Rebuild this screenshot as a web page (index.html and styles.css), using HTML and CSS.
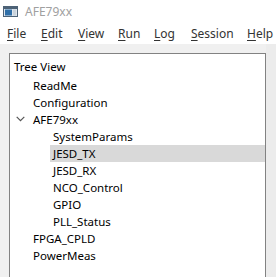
FILE: index.html
```html
<!DOCTYPE html>
<html>
<head>
<meta charset="utf-8">
<link rel="stylesheet" href="styles.css">
</head>
<body>
<div class="window">
  <div class="titlebar">
    <svg class="appicon" width="15" height="11" viewBox="0 0 15 11">
      <rect x="0.5" y="0.5" width="14" height="10" fill="#dfe6ee" stroke="#4d6276"/>
      <rect x="1" y="1" width="13" height="2" fill="#4d6276"/>
      <rect x="2" y="3.5" width="7" height="6" fill="#2f6fa8"/>
      <rect x="10" y="3.5" width="3" height="6" fill="#c9d3dc"/>
    </svg>
    <span class="title">AFE79xx</span>
  </div>
  <div class="menubar">
    <span class="menu"><u>F</u>ile</span>
    <span class="menu"><u>E</u>dit</span>
    <span class="menu"><u>V</u>iew</span>
    <span class="menu"><u>R</u>un</span>
    <span class="menu"><u>L</u>og</span>
    <span class="menu"><u>S</u>ession</span>
    <span class="menu"><u>H</u>elp</span>
  </div>
  <div class="body">
    <div class="panel">
      <div class="header">Tree View</div>
      <ul class="tree">
        <li class="row l1">ReadMe</li>
        <li class="row l1">Configuration</li>
        <li class="row l1 open"><span class="chev"><svg width="9" height="6" viewBox="0 0 9 6"><path d="M0.7 0.8 L4.5 4.6 L8.3 0.8" fill="none" stroke="#555" stroke-width="1.2"/></svg></span>AFE79xx</li>
        <li class="row l2">SystemParams</li>
        <li class="row l2 sel"><span class="lbl">JESD_TX</span></li>
        <li class="row l2">JESD_RX</li>
        <li class="row l2">NCO_Control</li>
        <li class="row l2">GPIO</li>
        <li class="row l2">PLL_Status</li>
        <li class="row l1">FPGA_CPLD</li>
        <li class="row l1">PowerMeas</li>
      </ul>
    </div>
  </div>
</div>
</body>
</html>
```
FILE: styles.css
```css
html, body {
  margin: 0;
  padding: 0;
}
body {
  width: 276px;
  height: 277px;
  overflow: hidden;
  background: #f0f0f0;
  font-family: "Noto Sans", "Open Sans", sans-serif;
  font-size: 11.5px;
  color: #000;
}
.window {
  display: flex;
  flex-direction: column;
  height: 277px;
}
.titlebar {
  background: #fff;
  height: 23px;
  display: flex;
  align-items: center;
  padding-left: 3px;
}
.appicon {
  display: block;
}
.title {
  margin-left: 7px;
  color: #a0a0a0;
  font-size: 12px;
}
.menubar {
  background: #fff;
  height: 21px;
  display: flex;
  align-items: center;
  padding-left: 7px;
  font-size: 12px;
}
.menu {
  color: #333;
  white-space: nowrap;
}
.menu:nth-child(1) { width: 34px; }
.menu:nth-child(2) { width: 37px; }
.menu:nth-child(3) { width: 40px; }
.menu:nth-child(4) { width: 36px; }
.menu:nth-child(5) { width: 37px; }
.menu:nth-child(6) { width: 56px; }
.menu u {
  text-decoration: underline;
  text-underline-offset: 2px;
  text-decoration-thickness: 1px;
}
.body {
  flex: 1;
  padding: 9px 10px 0 9px;
  display: flex;
  background: linear-gradient(to right, #f0f0f0 266px, #ececec 266px);
}
.panel {
  flex: 1;
  background: #fff;
  border: 1px solid #828282;
  border-bottom: none;
  padding-top: 4px;
}
.header {
  height: 17px;
  line-height: 17px;
  padding-left: 4px;
}
.tree {
  list-style: none;
  margin: 2px 0 0 0;
  padding: 0;
}
.row {
  height: 17px;
  line-height: 17px;
  white-space: nowrap;
  position: relative;
}
.l1 { padding-left: 23px; }
.l2 { padding-left: 43px; }
.chev {
  position: absolute;
  left: 6px;
  top: 5px;
  line-height: 0;
}
.sel {
  padding-left: 40px;
}
.sel .lbl {
  display: block;
  background: #d9d9d9;
  padding-left: 3px;
}
```
